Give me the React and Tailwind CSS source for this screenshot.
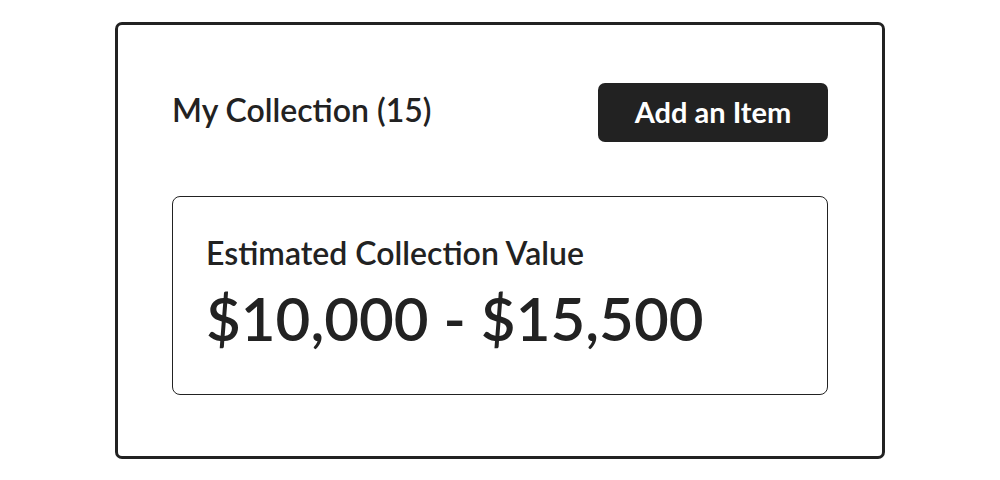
export default function App() {
  return (
    <div className="flex h-[480px] w-[1000px] items-center justify-center bg-white font-['Lato',sans-serif] text-[#222]">
      <div className="flex h-[437px] w-[770px] flex-col rounded-[7px] border-[3px] border-[#222] px-[54px] pt-[58px]">
        {/* Header */}
        <div className="flex items-center justify-between">
          <h1 className="mb-[5px] text-[32px] font-semibold leading-none">My Collection (15)</h1>
          <button className="flex h-[59px] w-[230px] items-center justify-center rounded-[7px] bg-[#222] text-[29px] font-bold text-white">
            Add an Item
          </button>
        </div>

        {/* Value card */}
        <div className="mt-[54px] h-[199px] rounded-[8px] border-[1.5px] border-[#222] px-[33px] pt-[40px]">
          <div className="text-[32px] font-semibold leading-none">Estimated Collection Value</div>
          <div className="mt-[19px] text-[60px] font-semibold leading-none">$10,000 - $15,500</div>
        </div>
      </div>
    </div>
  );
}
